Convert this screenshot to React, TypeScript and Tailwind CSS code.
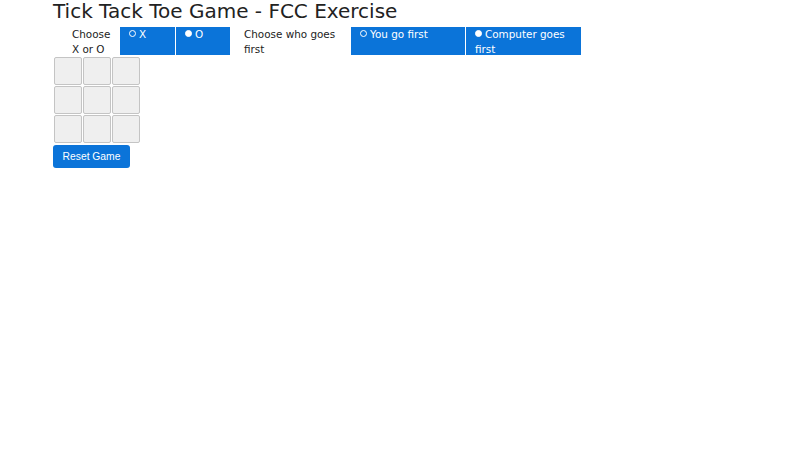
import React, { useState } from 'react';

type Mark = 'X' | 'O' | '';

const Radio: React.FC<{ checked: boolean }> = ({ checked }) => (
  <span
    className={`inline-block w-[7px] h-[7px] rounded-full border border-white mr-[3px] align-[1px] ${checked ? 'bg-white' : 'bg-transparent'}`}
  />
);

const App: React.FC = () => {
  const [player, setPlayer] = useState<'X' | 'O'>('O');
  const [first, setFirst] = useState<'you' | 'computer'>('computer');
  const [board, setBoard] = useState<Mark[]>(Array(9).fill(''));

  const play = (i: number) => {
    if (board[i]) return;
    const next = [...board];
    next[i] = player;
    setBoard(next);
  };

  return (
    <div className="min-h-[450px] bg-white pl-[53px] text-[#222] font-['DejaVu_Sans',sans-serif]">
      <h1 className="text-[20px] leading-[22px]">Tick Tack Toe Game - FCC Exercise</h1>

      <div className="flex items-start mt-[5px] text-[10.4px] leading-[15px]">
        <div className="w-[67px] pl-[19px]">Choose X or O</div>
        <button
          onClick={() => setPlayer('X')}
          className="w-[55px] h-[28px] bg-[#0b74d9] text-white text-left pl-[9px] flex items-start"
        >
          <span className="leading-[15px]"><Radio checked={player === 'X'} />X</span>
        </button>
        <button
          onClick={() => setPlayer('O')}
          className="w-[54px] h-[28px] ml-px bg-[#0b74d9] text-white text-left pl-[9px] flex items-start"
        >
          <span className="leading-[15px]"><Radio checked={player === 'O'} />O</span>
        </button>
        <div className="w-[121px] pl-[14px] pr-[4px]">Choose who goes first</div>
        <button
          onClick={() => setFirst('you')}
          className="w-[114px] h-[28px] bg-[#0b74d9] text-white text-left pl-[9px] flex items-start"
        >
          <span className="leading-[15px]"><Radio checked={first === 'you'} />You go first</span>
        </button>
        <button
          onClick={() => setFirst('computer')}
          className="w-[115px] h-[28px] ml-px bg-[#0b74d9] text-white text-left pl-[9px] pr-[4px] flex items-start"
        >
          <span className="leading-[15px]"><Radio checked={first === 'computer'} />Computer goes first</span>
        </button>
      </div>

      <div className="grid grid-cols-[repeat(3,28px)] gap-px ml-px w-max">
        {board.map((c, i) => (
          <button
            key={i}
            onClick={() => play(i)}
            className="w-[28px] h-[28px] bg-[#efefef] border border-[#c4c4c4] rounded-[2px] text-[14px]"
          >
            {c}
          </button>
        ))}
      </div>

      <button
        onClick={() => setBoard(Array(9).fill(''))}
        className="mt-[2px] w-[77px] h-[23px] rounded-[3px] bg-[#0b74d9] text-white text-[10.3px] font-['Liberation_Sans',sans-serif]"
      >
        Reset Game
      </button>
    </div>
  );
};

export default App;
